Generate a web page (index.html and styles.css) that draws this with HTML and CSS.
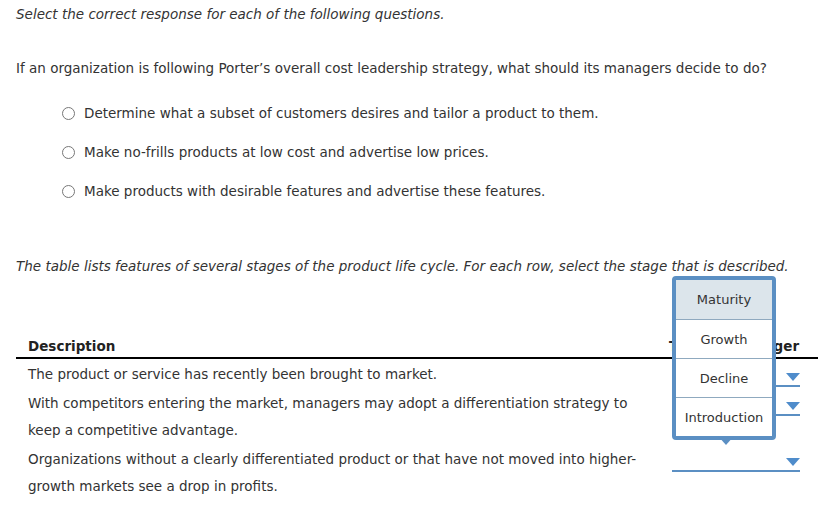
FILE: index.html
```html
<!DOCTYPE html>
<html lang="en">

<head>
	<meta charset="UTF-8">
	<title>Product life cycle</title>
	<link rel="stylesheet" href="styles.css">
</head>

<body>
	<p class="instr">Select the correct response for each of the following questions.</p>

	<p class="question">If an organization is following Porter’s overall cost leadership strategy, what should its managers decide to do?</p>

	<ul class="options">
		<li><span class="radio"></span>Determine what a subset of customers desires and tailor a product to them.</li>
		<li><span class="radio"></span>Make no-frills products at low cost and advertise low prices.</li>
		<li><span class="radio"></span>Make products with desirable features and advertise these features.</li>
	</ul>

	<p class="instr instr-table">The table lists features of several stages of the product life cycle. For each row, select the stage that is described.</p>

	<table class="stages">
		<thead>
			<tr>
				<th class="desc">Description</th>
				<th class="pick">Types Challenger</th>
			</tr>
		</thead>
		<tbody>
			<tr>
				<td class="desc">The product or service has recently been brought to market.</td>
				<td class="pick"><div class="select"></div></td>
			</tr>
			<tr>
				<td class="desc">With competitors entering the market, managers may adopt a differentiation strategy to keep a competitive advantage.</td>
				<td class="pick"><div class="select"></div></td>
			</tr>
			<tr>
				<td class="desc">Organizations without a clearly differentiated product or that have not moved into higher-growth markets see a drop in profits.</td>
				<td class="pick">
					<div class="select open">
						<!-- 展开的下拉菜单 -->
						<ul class="menu">
							<li class="hover">Maturity</li>
							<li>Growth</li>
							<li>Decline</li>
							<li>Introduction</li>
						</ul>
					</div>
				</td>
			</tr>
		</tbody>
	</table>
</body>

</html>
```

FILE: styles.css
```css
* {
	margin: 0;
	padding: 0;
	box-sizing: border-box;
}

li {
	list-style: none;
}

body {
	padding: 4px 16px 0;
	font-family: "DejaVu Sans", Verdana, sans-serif;
	font-size: 13.5px;
	color: #333;
	background: #fff;
}

.instr {
	font-style: italic;
	line-height: 20px;
	white-space: nowrap;
}

.question {
	margin-top: 34px;
	line-height: 20px;
}

.options {
	margin-top: 25px;
	padding-left: 46px;
}

.options li {
	display: flex;
	align-items: center;
	height: 20px;
	line-height: 20px;
	margin-bottom: 19px;
}

.options li:last-child {
	margin-bottom: 0;
}

.radio {
	width: 13px;
	height: 13px;
	margin-right: 9px;
	border: 1px solid #777;
	border-radius: 50%;
	flex: none;
}

.instr-table {
	margin-top: 55px;
}

.stages {
	width: 802px;
	margin-top: 60px;
	border-collapse: collapse;
	table-layout: fixed;
}

.stages th {
	text-align: left;
	font-weight: bold;
	line-height: 20px;
	padding: 0 0 1px 12px;
	border-bottom: 2px solid #000;
	color: #222;
	white-space: nowrap;
	overflow: hidden;
}

.stages td {
	vertical-align: top;
	line-height: 27px;
	padding: 2px 0 0 12px;
}

.stages .desc {
	width: 656px;
	padding-right: 14px;
}

.stages th.pick {
	padding-left: 0;
	text-indent: -3px;
	overflow: visible;
}

.stages td.pick {
	padding-left: 0;
	padding-right: 18px;
}

.select {
	position: relative;
	height: 24px;
	margin-top: 2px;
	border-bottom: 2px solid #5b8fc3;
}

.select::after {
	content: "";
	position: absolute;
	right: 0;
	top: 10px;
	border-left: 7px solid transparent;
	border-right: 7px solid transparent;
	border-top: 8px solid #4f8ccb;
}

.menu {
	position: absolute;
	left: 0;
	bottom: 30px;
	width: 104px;
	border: 4px solid #5b8fc3;
	border-radius: 4px;
	background: #fff;
	z-index: 10;
}

.menu::after {
	content: "";
	position: absolute;
	left: 42px;
	top: 100%;
	border-left: 8px solid transparent;
	border-right: 8px solid transparent;
	border-top: 9px solid #5b8fc3;
}

.menu li {
	height: 39px;
	line-height: 39px;
	text-align: center;
	font-size: 13px;
	color: #333;
	border-top: 1px solid #8fa9bf;
}

.menu li:first-child {
	border-top: 0;
}

.menu li.hover {
	background: #dce5eb;
}
```
